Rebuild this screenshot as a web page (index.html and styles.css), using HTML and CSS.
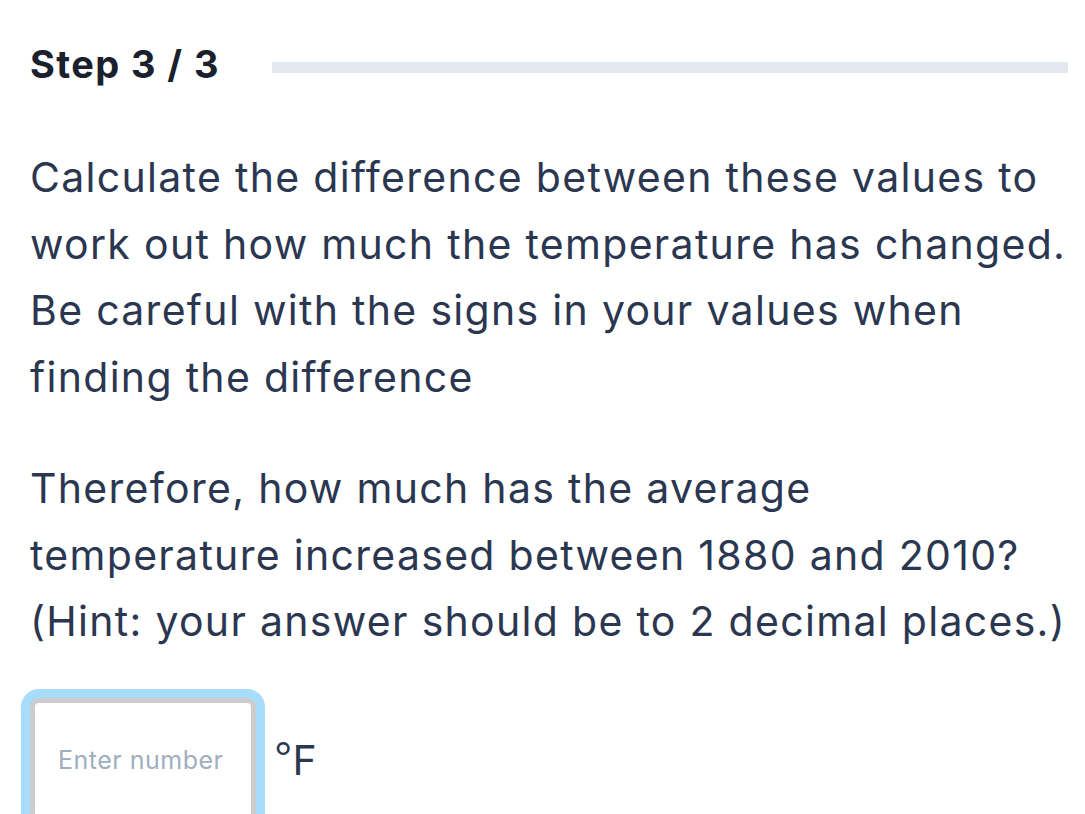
FILE: index.html
```html
<!DOCTYPE html>
<html>
<head>
<meta charset="utf-8">
<link rel="stylesheet" href="styles.css">
</head>
<body>
<div class="step-header">
  <h2 class="step-title">Step 3 / 3</h2>
  <div class="step-rule"></div>
</div>
<p class="para para-first">Calculate the difference between these values to work out how much the temperature has changed. Be careful with the signs in your values when finding the difference</p>
<p class="para para-second">Therefore, how much has the average temperature increased between 1880 and 2010? (Hint: your answer should be to 2 decimal places.)</p>
<div class="answer-row">
  <div class="input-box"><input class="num-input" type="text" placeholder="Enter number"></div>
  <span class="unit"><span class="deg">°</span>F</span>
</div>
</body>
</html>
```
FILE: styles.css
```css
html, body {
  margin: 0;
  padding: 0;
  background: #ffffff;
}
body {
  padding: 41px 17px 0 30px;
  font-family: "Inter", "Noto Sans", sans-serif;
  color: #2b3750;
}
.step-header {
  display: flex;
  align-items: center;
  gap: 52px;
  height: 46px;
}
.step-title {
  margin: 0;
  font-size: 38px;
  font-weight: 700;
  letter-spacing: 1.4px;
  color: #1a202c;
  white-space: nowrap;
  line-height: 46px;
}
.step-rule {
  flex: 1;
  height: 11px;
  margin-top: 7px;
  background: #e2e8f0;
}
.para {
  margin: 0;
  font-size: 41px;
  line-height: 66.5px;
  letter-spacing: 1.3px;
}
.para-first {
  margin-top: 57px;
}
.para-second {
  margin-top: 45px;
}
.answer-row {
  display: flex;
  align-items: center;
  gap: 18px;
  margin-top: 43px;
}
.input-box {
  margin-left: 0;
  width: 226px;
  height: 124px;
  box-sizing: border-box;
  border: 5px solid #cccccc;
  border-radius: 9px;
  box-shadow: 0 0 0 9px #a7dcfa;
  background: #fff;
  display: flex;
  align-items: center;
}
.num-input {
  border: none;
  outline: none;
  background: transparent;
  width: 100%;
  min-width: 0;
  padding: 0 0 0 23px;
  font-family: inherit;
  font-size: 25px;
  letter-spacing: 0.5px;
  color: #2b3750;
}
.num-input::placeholder {
  color: #a0aec0;
}
.unit {
  font-size: 41px;
  line-height: 50px;
  color: #2b3750;
}
.deg {
  font-family: "Liberation Sans", sans-serif;
  font-size: 46px;
  font-weight: 400;
}
```
